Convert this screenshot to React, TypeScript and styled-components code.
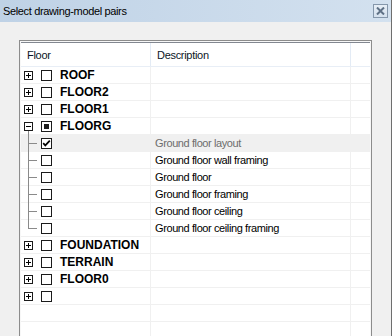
import React from 'react';
import styled, { createGlobalStyle, css } from 'styled-components';

const GlobalStyle = createGlobalStyle`
  html, body {
    margin: 0;
    padding: 0;
    background: #f0f0f0;
  }
  body {
    font-family: "Liberation Sans", Arial, sans-serif;
  }
  * {
    box-sizing: border-box;
  }
`;

const COLS = '130px 200px 1fr';

const Window = styled.div`
  width: 392px;
  height: 336px;
  background: #f0f0f0;
  border-right: 1px solid #6e6e6e;
  overflow: hidden;
`;

const TitleBar = styled.div`
  height: 22px;
  display: flex;
  align-items: center;
  justify-content: space-between;
  padding: 0 3px 0 3px;
  background: linear-gradient(to right, #bfd2e6, #d3e1ef);
`;

const Title = styled.span`
  font-size: 11px;
  letter-spacing: -0.35px;
  color: #000;
`;

const CloseButton = styled.div`
  width: 15px;
  height: 14px;
  margin-top: -1px;
  border: 1px solid #8597ab;
  background: linear-gradient(#e6eef6, #d5e1ee);
  display: flex;
  align-items: center;
  justify-content: center;
`;

const Body = styled.div`
  padding: 18px 0 0 19px;
`;

const Panel = styled.div`
  width: 353px;
  border: 1px solid #8c8c8c;
  padding: 1px;
  background: #f7f7f7;
`;

const Table = styled.div`
  background: #fff;
  border: 1px solid #828790;
  border-right: none;
  border-left: none;
  border-bottom: none;
  height: 300px;
`;

const HeaderRow = styled.div`
  display: grid;
  grid-template-columns: ${COLS};
  height: 24px;
  border-bottom: 1px solid #e8eef6;
`;

const HeaderCell = styled.div`
  display: flex;
  align-items: center;
  padding-left: 6px;
  border-right: 1px solid #e3ebf5;
  font-size: 11px;
  letter-spacing: -0.3px;
  color: #0b1626;

  &:last-child {
    border-right: none;
  }
`;

const Row = styled.div<{ $selected?: boolean }>`
  display: grid;
  grid-template-columns: ${COLS};
  height: 17px;
  border-bottom: 1px solid #f0f0f0;
  background: ${({ $selected }) => ($selected ? '#f0f0f0' : '#fff')};
`;

const Cell = styled.div`
  position: relative;
  display: flex;
  align-items: center;
  border-right: 1px solid #f0f0f0;

  &:last-child {
    border-right: none;
  }
`;

const FloorCell = styled(Cell)`
  padding-left: 3px;
`;

const Expander = styled.div<{ $open?: boolean }>`
  position: relative;
  width: 9px;
  height: 9px;
  border: 1px solid #1b1b1b;
  background: #fff;
  flex: none;

  &::before {
    content: '';
    position: absolute;
    left: 1px;
    top: 3px;
    width: 5px;
    height: 1px;
    background: #000;
  }

  ${({ $open }) =>
    !$open
      ? css`
          &::after {
            content: '';
            position: absolute;
            left: 3px;
            top: 1px;
            width: 1px;
            height: 5px;
            background: #000;
          }
        `
      : css`
          &::after {
            content: '';
            position: absolute;
            left: 3px;
            top: 8px;
            width: 1px;
            height: 6px;
            background: #8a8a8a;
          }
        `}
`;

const TreeGuide = styled.div<{ $last?: boolean }>`
  position: relative;
  align-self: stretch;
  width: 9px;
  flex: none;

  &::before {
    content: '';
    position: absolute;
    left: 4px;
    top: 0;
    width: 1px;
    height: ${({ $last }) => ($last ? '9px' : '17px')};
    background: #8a8a8a;
  }

  &::after {
    content: '';
    position: absolute;
    left: 4px;
    top: 8px;
    width: 9px;
    height: 1px;
    background: #8a8a8a;
  }
`;

const Check = styled.div`
  width: 11px;
  height: 11px;
  margin-left: 8px;
  border: 1px solid #1b1b1b;
  background: #fff;
  flex: none;
  display: flex;
  align-items: center;
  justify-content: center;
`;

const Partial = styled.div`
  width: 5px;
  height: 5px;
  background: #1e1e1e;
`;

const Name = styled.span`
  margin-left: 8px;
  font-size: 12px;
  font-weight: 700;
  color: #000;
  white-space: nowrap;
`;

const Description = styled.span<{ $muted?: boolean }>`
  padding-left: 4px;
  font-size: 11px;
  letter-spacing: -0.4px;
  color: ${({ $muted }) => ($muted ? '#6d6d6d' : '#000')};
  white-space: nowrap;
`;

type CheckState = 'none' | 'partial' | 'checked';

const CheckBox: React.FC<{ state: CheckState }> = ({ state }) => (
  <Check>
    {state === 'partial' && <Partial />}
    {state === 'checked' && (
      <svg width="9" height="9" viewBox="0 0 9 9">
        <polyline points="1.2,4.2 3.3,6.4 7.8,1.6" fill="none" stroke="#000" strokeWidth="1.7" />
      </svg>
    )}
  </Check>
);

const floorsTop = ['ROOF', 'FLOOR2', 'FLOOR1'];
const floorsBottom = ['FOUNDATION', 'TERRAIN', 'FLOOR0', ''];

const groundChildren = [
  { text: 'Ground floor layout', checked: true },
  { text: 'Ground floor wall framing', checked: false },
  { text: 'Ground floor', checked: false },
  { text: 'Ground floor framing', checked: false },
  { text: 'Ground floor ceiling', checked: false },
  { text: 'Ground floor ceiling framing', checked: false },
];

const FloorRow: React.FC<{ name: string }> = ({ name }) => (
  <Row>
    <FloorCell>
      <Expander />
      <CheckBox state="none" />
      {name && <Name>{name}</Name>}
    </FloorCell>
    <Cell />
    <Cell />
  </Row>
);

const App: React.FC = () => (
  <>
    <GlobalStyle />
    <Window>
      <TitleBar>
        <Title>Select drawing-model pairs</Title>
        <CloseButton>
          <svg width="9" height="8" viewBox="0 0 9 8">
            <path d="M1 0.5 L8 7.5 M8 0.5 L1 7.5" stroke="#5f7186" strokeWidth="2" fill="none" />
          </svg>
        </CloseButton>
      </TitleBar>
      <Body>
        <Panel>
          <Table>
            <HeaderRow>
              <HeaderCell>Floor</HeaderCell>
              <HeaderCell>Description</HeaderCell>
              <HeaderCell />
            </HeaderRow>
            {floorsTop.map(name => (
              <FloorRow key={name} name={name} />
            ))}
            <Row>
              <FloorCell>
                <Expander $open />
                <CheckBox state="partial" />
                <Name>FLOORG</Name>
              </FloorCell>
              <Cell />
              <Cell />
            </Row>
            {groundChildren.map((child, i) => (
              <Row key={child.text} $selected={i === 0}>
                <FloorCell>
                  <TreeGuide $last={i === groundChildren.length - 1} />
                  <CheckBox state={child.checked ? 'checked' : 'none'} />
                </FloorCell>
                <Cell>
                  <Description $muted={child.checked}>{child.text}</Description>
                </Cell>
                <Cell />
              </Row>
            ))}
            {floorsBottom.map((name, i) => (
              <FloorRow key={name || `blank-${i}`} name={name} />
            ))}
            <Row>
              <Cell />
              <Cell />
              <Cell />
            </Row>
            <Row>
              <Cell />
              <Cell />
              <Cell />
            </Row>
          </Table>
        </Panel>
      </Body>
    </Window>
  </>
);

export default App;
